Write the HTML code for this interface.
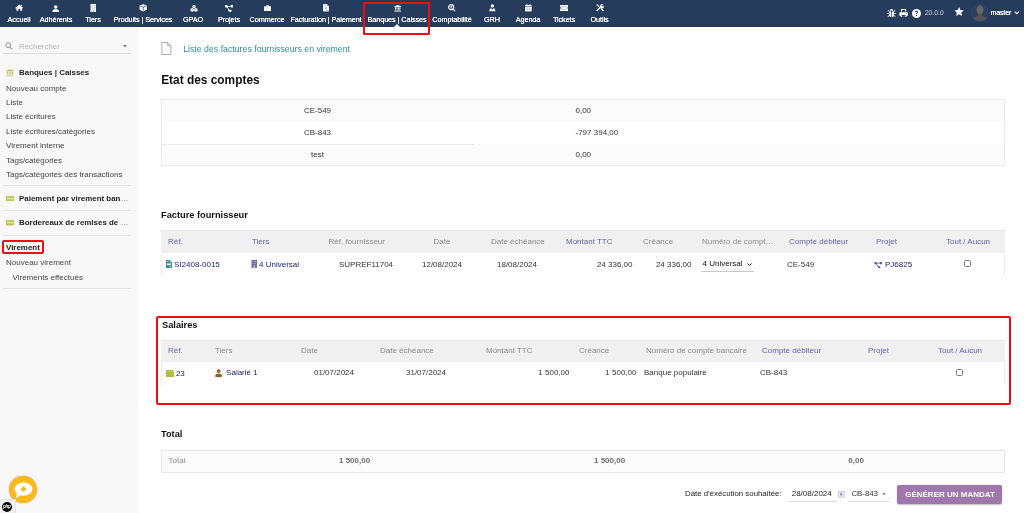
<!DOCTYPE html>
<html lang="fr">
<head>
<meta charset="utf-8">
<title>Liste des factures fournisseurs en virement</title>
<style>
*{box-sizing:border-box;margin:0;padding:0}
html,body{width:1024px;height:513px;overflow:hidden;background:#fff}
#top,#side,#main{will-change:transform}
body{position:relative;font-family:"Liberation Sans",Arial,sans-serif;font-size:7.6px;color:#333;-webkit-font-smoothing:antialiased}
.a{position:absolute;white-space:nowrap;line-height:10px}
#top{position:absolute;left:0;top:0;width:1024px;height:27px;background:#263c5c}
#top .m{position:absolute;top:15px;color:#fff;font-size:7.3px;line-height:10px;white-space:nowrap;transform:translateX(-50%);letter-spacing:-0.1px;text-shadow:0 0 .3px #fff}
#top svg{position:absolute;fill:#fff}
#side{position:absolute;left:0;top:27px;width:138px;height:486px;background:#f8f8f8}
#side .i{position:absolute;left:6px;color:#444;font-size:8px;line-height:10px;white-space:nowrap}
#side .h{position:absolute;color:#222;font-weight:bold;font-size:7.95px;line-height:10px;white-space:nowrap}
#side .sep{position:absolute;left:3px;width:128px;height:1px;background:#e4e4e4}
.lnk{color:#1e2470}
.th{color:#6262a6}
.tg{color:#8a8a8a}
.tbl{position:absolute;left:161px;width:844px}
.hd{position:absolute;left:0;width:100%;background:#f0f0f0}
.c{position:absolute;white-space:nowrap;line-height:10px;font-size:8px}
.r{transform:translateX(-100%)}
.m2{transform:translateX(-50%)}
.cb{position:absolute;width:7.300px;height:7.300px;border:1px solid #7c7c7c;border-radius:1.500px;background:#fff}
</style>
</head>
<body>

<!-- ===== top navigation ===== -->
<div id="top">
  <span class="m" style="left:19px">Accueil</span>
  <span class="m" style="left:56px">Adhérents</span>
  <span class="m" style="left:93px">Tiers</span>
  <span class="m" style="left:143px">Produits | Services</span>
  <span class="m" style="left:193px">GPAO</span>
  <span class="m" style="left:229px">Projets</span>
  <span class="m" style="left:267px">Commerce</span>
  <span class="m" style="left:326px">Facturation | Paiement</span>
  <span class="m" style="left:397px">Banques | Caisses</span>
  <span class="m" style="left:452px">Comptabilité</span>
  <span class="m" style="left:492px">GRH</span>
  <span class="m" style="left:528px">Agenda</span>
  <span class="m" style="left:564px">Tickets</span>
  <span class="m" style="left:599.500px">Outils</span>

  <!-- icons (simplified glyphs) -->
  <svg style="left:14.700px;top:4.300px" width="8.500" height="7.300" viewBox="0 0 18 16"><path d="M9 1.200 L17.600 8.600 L16.400 10 L15.200 9 V15 H11 V10.600 H7 V15 H2.800 V9 L1.600 10 L0.400 8.600 Z M13 1.600 h2.200 v3.400 l-2.200 -1.900z"/></svg>
  <svg style="left:52.400px;top:4.600px" width="7.400" height="7.300" viewBox="0 0 16 16"><circle cx="8" cy="4.400" r="3.900"/><path d="M1 16 v-2.200 c0-2.600 2-4.300 4.400-4.300 h5.200 c2.400 0 4.400 1.700 4.400 4.300 V16z"/></svg>
  <svg style="left:89.700px;top:4px" width="6.800" height="8" viewBox="0 0 14 16"><path d="M1 0 h12 v15 h1 v1 h-14 v-1 h1z"/><g fill="#263c5c" opacity=".42"><rect x="3.400" y="2" width="2.200" height="2"/><rect x="8.400" y="2" width="2.200" height="2"/><rect x="3.400" y="5.600" width="2.200" height="2"/><rect x="8.400" y="5.600" width="2.200" height="2"/><rect x="3.400" y="9.200" width="2.200" height="2"/><rect x="8.400" y="9.200" width="2.200" height="2"/><rect x="5.600" y="12.600" width="2.800" height="3.400"/></g></svg>
  <svg style="left:139px;top:4.400px" width="8.400" height="7.600" viewBox="0 0 18 17"><path d="M9 0.300 L17 3.300 V13 L9 16.700 L1 13 V3.300z"/><path d="M2.500 4.600 L9 7.200 L15.500 4.600 M9 7.200 V15" stroke="#263c5c" stroke-width="1.600" fill="none"/></svg>
  <svg style="left:189.800px;top:4.600px" width="8" height="7" viewBox="0 0 18 17"><path d="M9 0 L13 1.600 V6.200 L9 8 L5 6.200 V1.600z M4.500 7.400 L8.600 9 V14.400 L4.500 16.500 L0.400 14.400 V9z M13.500 7.400 L17.600 9 V14.400 L13.500 16.500 L9.400 14.400 V9z"/><path d="M5.800 2.300 L9 3.600 L12.200 2.300 M1.200 9.700 L4.500 11 L7.800 9.700 M10.200 9.700 L13.500 11 L16.800 9.700" stroke="#263c5c" stroke-width="1" fill="none" opacity=".7"/></svg>
  <svg style="left:224.900px;top:4.700px" width="8.400" height="7.200" viewBox="0 0 18 15"><rect x="0" y="0" width="5.500" height="5" rx="1"/><rect x="12.500" y="0" width="5.500" height="5" rx="1"/><rect x="8" y="10" width="5.500" height="5" rx="1"/><path d="M5 1.700 h8 v1.600 h-8z M3.500 4.200 l1.600-.8 4.800 7.400 -1.600.8z"/></svg>
  <svg style="left:263.700px;top:5px" width="7.400" height="6.400" viewBox="0 0 17 15"><path d="M5.500 3 V1.200 C5.500 .5 6 0 6.700 0 h3.600 c.7 0 1.200.5 1.200 1.200 V3 h4 c.8 0 1.500.7 1.500 1.500 v9 c0 .8-.7 1.500-1.500 1.500 h-14 C.7 15 0 14.300 0 13.500 v-9 C0 3.700.7 3 1.500 3z M7 1.500 V3 h3 V1.500z"/></svg>
  <svg style="left:323.200px;top:4.400px" width="6" height="7.500" viewBox="0 0 14 18"><path d="M1.200 0 H8.500 L14 5.500 V16.800 c0 .7-.5 1.200-1.200 1.200 H1.200 C.5 18 0 17.500 0 16.800 V1.200 C0 .5.500 0 1.200 0z"/><path d="M8.500 0 V5.500 H14z" fill="#a8b4c8"/><g fill="#263c5c" opacity=".55"><rect x="2.500" y="3" width="4" height="1.400"/><rect x="5.500" y="7.500" width="3" height="5.500"/><rect x="7.500" y="14.500" width="4" height="1.400"/></g></svg>
  <svg style="left:393.800px;top:4.900px" width="7.300" height="6.700" viewBox="0 0 18 16"><path d="M9 0 L17.500 3.200 V4.800 H.5 V3.200z M2.200 5.600 h2.400 v6 H2.200z M6.200 5.600 h2.200 v6 H6.200z M9.800 5.600 h2.200 v6 H9.800z M13.400 5.600 h2.400 v6 h-2.400z M1.400 12.400 h15.200 v1.400 H1.400z M.3 14.500 h17.400 V16 H.3z"/></svg>
  <svg style="left:448.300px;top:4.400px" width="7.700" height="7.700" viewBox="0 0 17 17"><circle cx="7" cy="7" r="5.600" fill="none" stroke="#fff" stroke-width="2.600"/><path d="M11 12.600 l1.600-1.600 4.200 4.200 -1.600 1.600z"/><rect x="6.300" y="3.800" width="1.500" height="6.400"/><rect x="5" y="5" width="4" height="1.300"/><rect x="5" y="7.800" width="4" height="1.300"/></svg>
  <svg style="left:489.400px;top:4.400px" width="6.700" height="7.500" viewBox="0 0 16 17"><circle cx="8" cy="4.200" r="4"/><path d="M1 17 v-2.800 c0-2.600 1.900-4.400 4.300-4.600 L8 13.500 10.700 9.600 c2.400.2 4.300 2 4.300 4.600 V17z"/></svg>
  <svg style="left:525.100px;top:4.400px" width="6.900" height="7.500" viewBox="0 0 15 17"><path d="M0 3.500 C0 2.700.7 2 1.500 2 H3 V0 h2 v2 h5 V0 h2 v2 h1.500 c.8 0 1.500.7 1.500 1.500 V5 H0z M0 6.200 h15 v9.300 c0 .8-.7 1.500-1.500 1.500 h-12 C.7 17 0 16.300 0 15.500z"/><g fill="#263c5c" opacity=".4"><rect x="4.400" y="6.200" width="1" height="10.800"/><rect x="9.600" y="6.200" width="1" height="10.800"/><rect x="0" y="11" width="15" height="1"/></g></svg>
  <svg style="left:560.100px;top:5px" width="8.400" height="6" viewBox="0 0 18 13"><path d="M1.500 0 h15 c.8 0 1.500.7 1.500 1.500 V4.500 c-1.100 0-2 .9-2 2 s.9 2 2 2 v3 c0 .8-.7 1.500-1.500 1.500 h-15 C.7 13 0 12.300 0 11.500 v-3 c1.100 0 2-.9 2-2 s-.9-2-2-2 V1.500 C0 .7.700 0 1.500 0z"/><rect x="4.200" y="3" width="9.600" height="7" fill="#263c5c" opacity=".5"/><rect x="5.300" y="4.100" width="7.400" height="4.800"/></svg>
  <svg style="left:595.800px;top:4.400px" width="8" height="7.600" viewBox="0 0 18 18"><path d="M1.200 14.300 L11.800 3.700 l2.400 2.400 L3.600 16.700 c-.7.700-1.700.7-2.400 0 s-.7-1.700 0-2.400z M10.500 1.800 C12.200 .1 14.500-.3 16.200.3 l-2.600 2.600 .4 2.300 2.300.4 2.600-2.600 c.6 1.700.2 4-1.500 5.700 s-4.200 2-5.900 1.200 L9.300 7.700 C8.500 6 8.800 3.500 10.500 1.800z M.5 2.200 L2.200.5 5 2 5.600 4.200 9.200 7.800 7.800 9.200 4.200 5.600 2 5z M10.800 11.500 l1.800-1.800 4.800 4.800 c.7.700.7 1.700 0 2.400 s-1.700.7-2.400 0z"/></svg>

  <!-- selected-menu marker + annotation -->
  <svg style="left:393px;top:23.500px" width="8" height="4" viewBox="0 0 8 4"><path d="M0 4 L4 0 L8 4z"/></svg>

  <!-- right side -->
  <svg style="left:886.700px;top:8.600px" width="9.200" height="8.700" viewBox="0 0 20 19"><path d="M10 0 c2.200 0 4 1.700 4 3.900 H6 C6 1.700 7.800 0 10 0z M5 5.300 h4.200 V18 C6.700 17.700 5 15.600 5 13z M10.800 5.300 H15 V13 c0 2.600-1.700 4.700-4.200 5z M0 9.400 h4 v1.700 H0z M16 9.400 h4 v1.700 h-4z M1.200 3.200 l1.200-1.200 3 3 -1.200 1.200z M17.600 2 l1.200 1.200 -3 3 -1.200-1.200z M2.400 17.600 l-1.200-1.200 3.200-3.200 1.200 1.200z M18.800 16.400 l-1.200 1.200 -3.200-3.200 1.200-1.200z"/></svg>
  <svg style="left:899.300px;top:8.700px" width="9.200" height="8.600" viewBox="0 0 18 18"><path d="M3.500 0 h9 L14.500 2 V6 h-2 V2.800 L11.700 2 H5.500 V6 h-2z M2 7 h14 c1.100 0 2 .9 2 2 v5 h-3 v4 H3 v-4 H0 V9 c0-1.100.9-2 2-2z M5 12.500 V16 h8 v-3.500z"/><circle cx="15" cy="9.800" r=".9" fill="#263c5c"/></svg>
  <svg style="left:912px;top:8.700px" width="9" height="9" viewBox="0 0 18 18"><circle cx="9" cy="9" r="9"/><path d="M6 6.600 C6 4.800 7.300 3.700 9.100 3.700 s3.100 1.100 3.100 2.700 c0 2.200-2.300 2.200-2.300 4.200 H8 c0-2.600 2.200-2.700 2.200-4.100 0-.6-.5-1-1.200-1 s-1.200.4-1.200 1.100z M8 11.800 h2 v2.100 H8z" fill="#263c5c"/></svg>
  <span class="a" style="left:924.700px;top:7.800px;color:#ccd1dc;font-size:7.100px;letter-spacing:-.12px">20.0.0</span>
  <svg style="left:954.200px;top:7.400px" width="10.200" height="9.400" viewBox="0 0 18 18"><path d="M9 0 L11.600 5.900 18 6.600 13.200 10.900 14.600 17.300 9 14 3.400 17.300 4.800 10.900 0 6.600 6.400 5.900z"/></svg>
  <svg style="left:971px;top:4px" width="18" height="18" viewBox="0 0 36 36"><defs><clipPath id="av"><circle cx="18" cy="18" r="16.500"/></clipPath></defs><circle cx="18" cy="18" r="17.500" fill="#3c4f6e"/><g clip-path="url(#av)"><rect width="36" height="36" fill="#2b3e5d"/><ellipse cx="18" cy="12" rx="7" ry="9.500" fill="#666"/><path d="M3.500 36 c0-8 5-11 10.500-12 v-5 h8 v5 c5.500 1 10.500 4 10.500 12z" fill="#555"/></g></svg>
  <span class="a" style="left:990.400px;top:7.800px;color:#fff;font-size:7.100px;letter-spacing:-.15px;text-shadow:0 0 .3px #fff">master</span>
  <svg style="left:1014.400px;top:11.300px" width="5.800" height="3.800" viewBox="0 0 12 8"><path d="M1.500 1.200 L6 5.700 10.500 1.200" fill="none" stroke="#fff" stroke-width="2.200"/></svg>
</div>
<div style="position:absolute;left:363.200px;top:2.200px;width:67px;height:33px;border:2px solid #f00c14;border-radius:1px"></div>

<!-- ===== left sidebar ===== -->
<div id="side">
  <!-- search -->
  <svg class="a" style="left:5.200px;top:15px" width="8" height="8" viewBox="0 0 16 16"><circle cx="6.500" cy="6.500" r="4.800" fill="none" stroke="#8a8a8a" stroke-width="2"/><path d="M10 11.400 l1.400-1.400 4.300 4.300 -1.400 1.400z" fill="#8a8a8a"/></svg>
  <span class="a" style="left:19px;top:14.500px;color:#b4b4b4;font-size:7.900px">Rechercher</span>
  <svg class="a" style="left:123.400px;top:18.200px" width="4" height="2.600" viewBox="0 0 10 6"><path d="M0 0 h10 L5 6z" fill="#777"/></svg>
  <div class="sep" style="top:26px;background:#dcdcdc"></div>

  <!-- Banques | Caisses block -->
  <svg class="a" style="left:6px;top:42px" width="8" height="7.500" viewBox="0 0 18 16"><path fill="#bcc45c" d="M9 0 L17.500 3.200 V4.800 H.5 V3.200z M2.200 5.600 h2.400 v6 H2.200z M6.200 5.600 h2.200 v6 H6.200z M9.800 5.600 h2.200 v6 H9.800z M13.400 5.600 h2.400 v6 h-2.400z M1.400 12.400 h15.200 v1.400 H1.400z M.3 14.500 h17.400 V16 H.3z"/></svg>
  <span class="h" style="left:19px;top:41px">Banques | Caisses</span>
  <span class="i" style="top:56.600px">Nouveau compte</span>
  <span class="i" style="top:71px">Liste</span>
  <span class="i" style="top:85.400px">Liste écritures</span>
  <span class="i" style="top:99.800px">Liste écritures/catégories</span>
  <span class="i" style="top:114.200px">Virement interne</span>
  <span class="i" style="top:128.600px">Tags/catégories</span>
  <span class="i" style="top:143px">Tags/catégories des transactions</span>
  <div class="sep" style="top:158px"></div>

  <!-- Paiement par virement -->
  <svg class="a" style="left:6px;top:168.500px" width="8" height="5.500" viewBox="0 0 16 11"><rect width="16" height="11" rx="1.500" fill="#bcc45c"/><rect x="2" y="4" width="12" height="2.400" fill="#e4e8b4"/></svg>
  <span class="h" style="left:19px;top:166.500px">Paiement par virement ban<span style="font-weight:normal;color:#666">…</span></span>
  <div class="sep" style="top:183px"></div>

  <!-- Bordereaux -->
  <svg class="a" style="left:6px;top:193px" width="8" height="5.500" viewBox="0 0 16 11"><rect width="16" height="11" rx="1.500" fill="#bcc45c"/><rect x="2" y="4" width="12" height="2.400" fill="#e4e8b4"/></svg>
  <span class="h" style="left:19px;top:190.500px">Bordereaux de remises de <span style="font-weight:normal;color:#666">…</span></span>
  <div class="sep" style="top:208px"></div>

  <!-- Virement -->
  <span class="h" style="left:6px;top:215.500px">Virement</span>
  <div style="position:absolute;left:2.300px;top:212.800px;width:41.600px;height:14px;border:2px solid #f00c14;border-radius:2px"></div>
  <span class="i" style="top:230.500px">Nouveau virement</span>
  <span class="i" style="left:12.500px;top:245.500px">Virements effectués</span>
  <div class="sep" style="top:261px"></div>

  <!-- floating widgets -->
  <div style="position:absolute;left:9px;top:448.500px;width:27.500px;height:27.500px;border-radius:50%;background:#fcb81c;box-shadow:0 0 1.500px rgba(0,0,0,.35)"></div>
  <svg class="a" style="left:13.600px;top:454.500px" width="19" height="16.800" viewBox="0 0 36 32"><ellipse cx="18" cy="13.500" rx="17" ry="12.500" fill="#fff"/><path d="M6 20 L3.500 31 14 24z" fill="#fff"/><path d="M16 8.500 h4 v3 h3 v4 h-3 v3 h-4 v-3 h-3 v-4 h3z" fill="#fcb81c"/></svg>
  <div style="position:absolute;left:0;top:472px;width:16px;height:14px;background:#f1f1f1;border-top:1px solid #e3e3e3;border-right:1px solid #e3e3e3"></div>
  <div style="position:absolute;left:1.500px;top:474.500px;width:10.500px;height:10.500px;border-radius:50%;background:#050505;color:#fff;font-size:4.500px;line-height:10.500px;text-align:center;font-weight:bold;font-style:italic;letter-spacing:-.3px;overflow:hidden">php</div>
</div>

<!-- ===== main ===== -->
<div id="main">
  <!-- page title -->
  <svg class="a" style="left:161.200px;top:42.200px" width="10.800" height="13" viewBox="0 0 21 26"><path d="M1.500 1 H13 L19.500 7.500 V25 H1.500z M13 1 V7.500 H19.500" fill="#fff" stroke="#a0a0a0" stroke-width="1.700" stroke-linejoin="round"/></svg>
  <span class="a" style="left:183.200px;top:43.700px;font-size:8.750px;color:#2f8f99">Liste des factures fournisseurs en virement</span>

  <span class="a" style="left:161.200px;top:73.200px;font-size:11.900px;line-height:14px;font-weight:bold;color:#111">Etat des comptes</span>

  <!-- accounts state table -->
  <div class="tbl" style="top:99px;height:67px;border:1px solid #e9e9e9">
    <div class="hd" style="top:0;height:22px;background:#fbfbfb"></div>
    <div class="hd" style="top:43.500px;height:21.500px;background:#fbfbfb"></div>
    <div style="position:absolute;left:0;top:44px;width:312px;height:1px;background:#ececec"></div>
    <span class="c m2" style="left:155.500px;top:5.500px">CE-549</span>
    <span class="c" style="left:413.500px;top:5.500px">0,00</span>
    <span class="c m2" style="left:155.500px;top:27.500px">CB-843</span>
    <span class="c" style="left:413.500px;top:27.500px">-797 394,00</span>
    <span class="c m2" style="left:155.500px;top:49.500px">test</span>
    <span class="c" style="left:413.500px;top:49.500px">0,00</span>
  </div>

  <!-- supplier invoices -->
  <span class="a" style="left:161px;top:209.500px;font-size:9.250px;font-weight:bold;color:#111">Facture fournisseur</span>
  <div class="tbl" style="top:230px;height:45px;box-shadow:inset 1px 0 0 #ececec, inset -1px 0 0 #ececec">
    <div class="hd" style="top:0;height:23px;border-top:1px solid #e6e6e6"></div>
    <span class="c th" style="left:7px;top:7px">Réf.</span>
    <span class="c th" style="left:91px;top:7px">Tiers</span>
    <span class="c tg" style="left:167.500px;top:7px">Réf. fournisseur</span>
    <span class="c tg m2" style="left:281px;top:7px">Date</span>
    <span class="c tg" style="left:330px;top:7px">Date échéance</span>
    <span class="c th" style="left:405px;top:7px">Montant TTC</span>
    <span class="c tg" style="left:482px;top:7px">Créance</span>
    <span class="c tg" style="left:541px;top:7px">Numéro de compt…</span>
    <span class="c th" style="left:628px;top:7px">Compte débiteur</span>
    <span class="c th" style="left:715px;top:7px">Projet</span>
    <span class="c th" style="left:785px;top:7px">Tout / Aucun</span>

    <svg class="a" style="left:4.900px;top:29.700px" width="6" height="8" viewBox="0 0 12 16"><path d="M1 0 H7.500 L12 4.500 V15 c0 .6-.4 1-1 1 H1 c-.6 0-1-.4-1-1 V1 C0 .4.400 0 1 0z" fill="#3c8c94"/><path d="M7.500 0 V4.500 H12z" fill="#a4ccd0"/><rect x="2" y="2.500" width="3.500" height="1.200" fill="#fff"/><rect x="2" y="7" width="8" height="3.200" fill="#fff"/><rect x="6.500" y="12.200" width="3.500" height="1.200" fill="#fff"/></svg>
    <span class="c lnk" style="left:13px;top:29.900px">SI2408-0015</span>
    <svg class="a" style="left:89.600px;top:30px" width="6.600" height="7.700" viewBox="0 0 13 15"><path d="M1 0 h11 v14 h1 v1 H0 v-1 h1z" fill="#6a6aac"/><g fill="#fff" opacity=".5"><rect x="3" y="2" width="2.400" height="2"/><rect x="7.600" y="2" width="2.400" height="2"/><rect x="3" y="5.500" width="2.400" height="2"/><rect x="7.600" y="5.500" width="2.400" height="2"/><rect x="5" y="10" width="3" height="5"/></g></svg>
    <span class="c lnk" style="left:98px;top:29.900px">4 Universal</span>
    <span class="c m2" style="left:205px;top:29.900px">SUPREF11704</span>
    <span class="c m2" style="left:281px;top:29.900px">12/08/2024</span>
    <span class="c m2" style="left:356px;top:29.900px">18/08/2024</span>
    <span class="c r" style="left:471.500px;top:29.900px">24 336,00</span>
    <span class="c r" style="left:530.500px;top:29.900px">24 336,00</span>
    <span class="c" style="left:541.500px;top:29.400px;color:#111">4 Universal</span>
    <svg class="a" style="left:586px;top:33.400px" width="5" height="3.500" viewBox="0 0 10 7"><path d="M1 1 L5 5 9 1" fill="none" stroke="#111" stroke-width="2"/></svg>
    <div style="position:absolute;left:540px;top:41px;width:53px;height:1px;background:#c8c8c8"></div>
    <span class="c" style="left:626px;top:29.900px">CE-549</span>
    <svg class="a" style="left:712.800px;top:31.600px" width="8.600" height="6.400" viewBox="0 0 18 15"><g fill="#5a5aa8"><rect x="0" y="0" width="5.500" height="5" rx="1"/><rect x="12.500" y="0" width="5.500" height="5" rx="1"/><rect x="8" y="10" width="5.500" height="5" rx="1"/><path d="M5 1.700 h8 v1.600 h-8z M3.500 4.200 l1.600-.8 4.800 7.400 -1.600.8z"/></g></svg>
    <span class="c lnk" style="left:724px;top:29.900px">PJ6825</span>
    <div class="cb" style="left:802.500px;top:29.700px"></div>
  </div>

  <!-- salaries -->
  <div style="position:absolute;left:156px;top:316.300px;width:855px;height:89px;border:2px solid #f00c14;border-radius:2px"></div>
  <span class="a" style="left:162px;top:320px;font-size:9.250px;font-weight:bold;color:#111">Salaires</span>
  <div class="tbl" style="top:340.200px;height:44.400px;box-shadow:inset 1px 0 0 #ececec, inset -1px 0 0 #ececec">
    <div class="hd" style="top:0;height:22px;border-top:1px solid #e6e6e6"></div>
    <span class="c th" style="left:7px;top:6px">Réf.</span>
    <span class="c tg" style="left:54px;top:6px">Tiers</span>
    <span class="c tg" style="left:140px;top:6px">Date</span>
    <span class="c tg" style="left:219px;top:6px">Date échéance</span>
    <span class="c tg" style="left:325px;top:6px">Montant TTC</span>
    <span class="c tg" style="left:418px;top:6px">Créance</span>
    <span class="c tg" style="left:485px;top:6px">Numéro de compte bancaire</span>
    <span class="c th" style="left:601px;top:6px">Compte débiteur</span>
    <span class="c th" style="left:707px;top:6px">Projet</span>
    <span class="c th" style="left:777px;top:6px">Tout / Aucun</span>

    <svg class="a" style="left:4.900px;top:29.700px" width="8" height="7.500" viewBox="0 0 16 15"><path d="M2 0 H13 c.8 0 1.500.7 1.500 1.500 V3 H15 c.6 0 1 .4 1 1 V14 c0 .6-.4 1-1 1 H2 C.9 15 0 14.100 0 13 V2 C0 .9.900 0 2 0z" fill="#b3bb3c"/><path d="M1.500 2 H14.500 V3.300 H1.500z" fill="#ccd27a"/><circle cx="13" cy="9" r="1.100" fill="#e0e4a8"/></svg>
    <span class="c lnk" style="left:14.900px;top:28.400px">23</span>
    <div style="position:absolute;left:52.300px;top:28px;width:10.600px;height:10.600px;border-radius:50%;background:#f5f5f5"></div><svg class="a" style="left:53.900px;top:29.200px" width="7.300" height="8" viewBox="0 0 16 17"><circle cx="8" cy="4.400" r="3.900" fill="#8a6428"/><path d="M1 17 v-2.800 c0-2.600 2-4.300 4.400-4.300 h5.200 c2.400 0 4.400 1.700 4.400 4.300 V17z" fill="#8a6428"/></svg>
    <span class="c lnk" style="left:65.100px;top:27.800px">Salarié 1</span>
    <span class="c m2" style="left:173px;top:28.300px">01/07/2024</span>
    <span class="c m2" style="left:265px;top:28.300px">31/07/2024</span>
    <span class="c r" style="left:408.500px;top:28.300px">1 500,00</span>
    <span class="c r" style="left:475.500px;top:28.300px">1 500,00</span>
    <span class="c" style="left:483px;top:28.300px">Banque populaire</span>
    <span class="c" style="left:599px;top:28.300px">CB-843</span>
    <div class="cb" style="left:794.500px;top:28.500px"></div>
  </div>

  <!-- total -->
  <span class="a" style="left:161px;top:429px;font-size:9.250px;font-weight:bold;color:#111">Total</span>
  <div class="tbl" style="top:449.500px;height:23px;border:1px solid #e7e7e7;background:#fbfbfb">
    <span class="c" style="left:6.500px;top:5.400px;color:#8c8c8c">Total</span>
    <span class="c" style="left:177px;top:5.400px;color:#6e6e6e;font-weight:bold">1 500,00</span>
    <span class="c" style="left:432px;top:5.400px;color:#6e6e6e;font-weight:bold">1 500,00</span>
    <span class="c" style="left:686.300px;top:5.400px;color:#6e6e6e;font-weight:bold">0,00</span>
  </div>

  <!-- bottom action line -->
  <span class="a" style="left:685px;top:489.400px;font-size:7.850px;color:#222">Date d'éxécution souhaitée:</span>
  <span class="a" style="left:791.700px;top:489.400px;font-size:8px;color:#222">28/08/2024</span>
  <div style="position:absolute;left:786.500px;top:501.200px;width:50.500px;height:1px;background:#e0e0e0"></div>
  <svg class="a" style="left:838.200px;top:491px" width="6.600" height="6.500" viewBox="0 0 14 14"><rect x=".7" y=".7" width="12.600" height="12.600" fill="#ececf4" stroke="#bcbcdc" stroke-width="1.400"/><rect x="4.500" y="5" width="4.500" height="4.500" fill="#a87cbc"/><rect x="1.400" y="1.400" width="11.200" height="2" fill="#d4d4ec"/></svg>
  <span class="a" style="left:851.400px;top:489.400px;font-size:7.850px;color:#333">CB-843</span>
  <svg class="a" style="left:882.400px;top:493.400px" width="3.800" height="2.400" viewBox="0 0 8 5"><path d="M0 0 h8 L4 5z" fill="#888"/></svg>
  <div style="position:absolute;left:848px;top:501.200px;width:42px;height:1px;background:#e0e0e0"></div>
  <div style="position:absolute;left:897.300px;top:485px;width:105px;height:19px;background:#a077ac;border-radius:2px;box-shadow:0 .5px 1.500px rgba(0,0,0,.25)"></div>
  <span class="a" style="left:950px;top:489.500px;font-size:8px;font-weight:bold;color:#fff;transform:translateX(-50%)">GÉNÉRER UN MANDAT</span>
</div>

</body>
</html>
